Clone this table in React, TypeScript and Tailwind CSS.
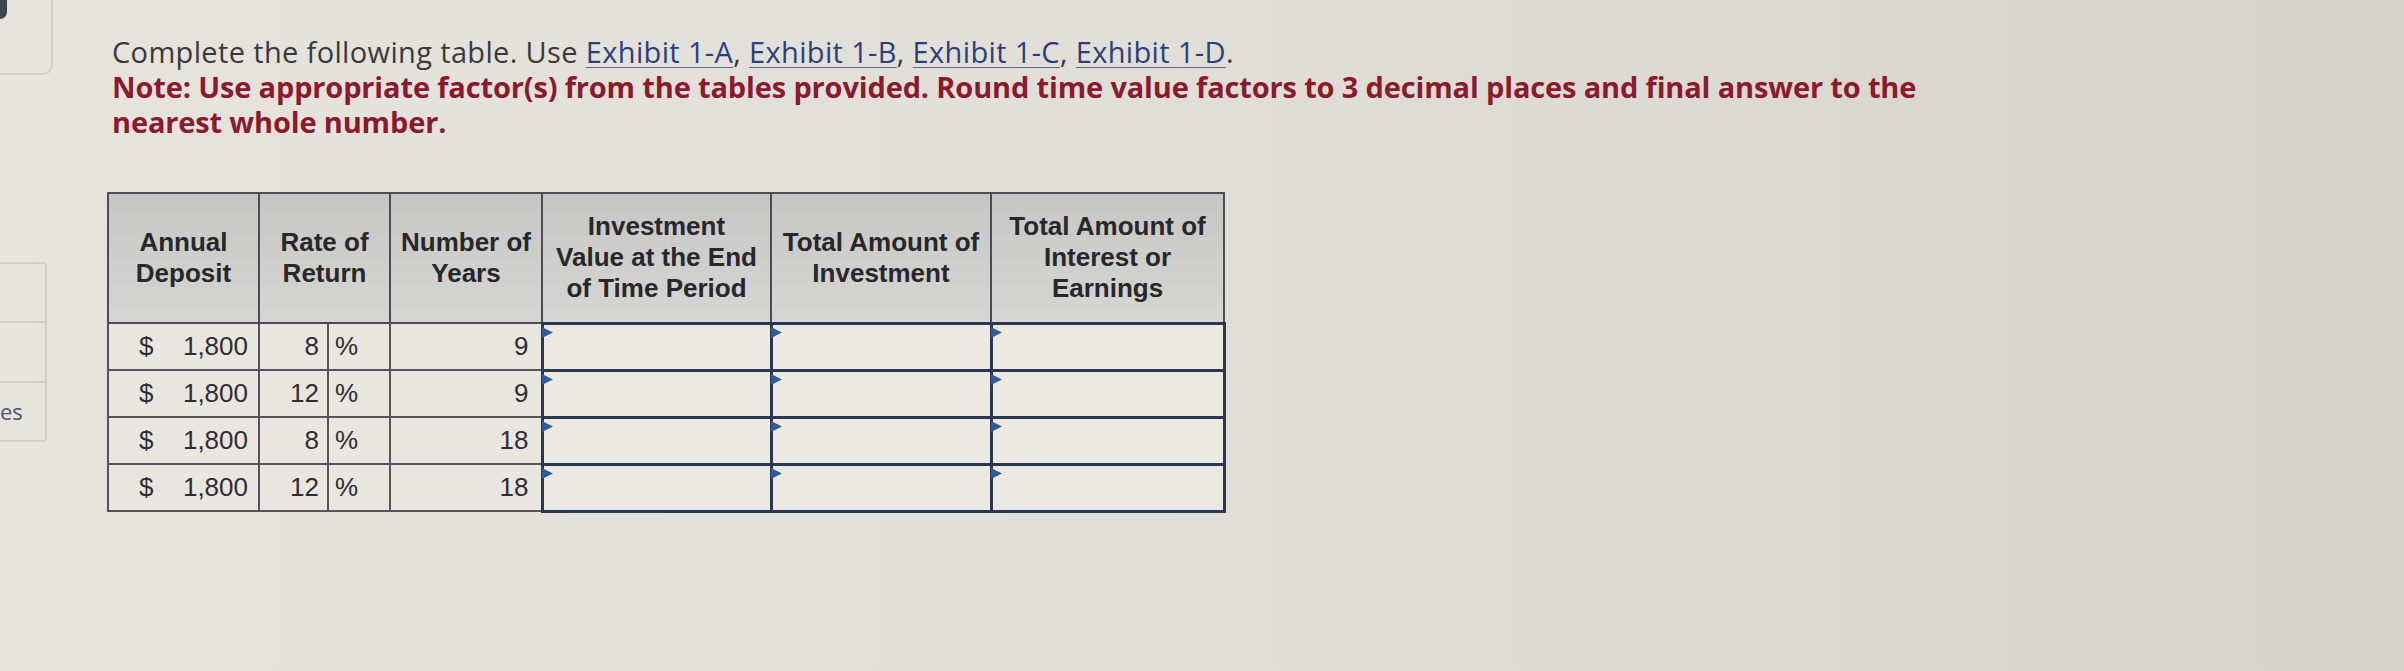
import { useState } from "react";

type Row = { deposit: string; rate: string; years: string };

const rows: Row[] = [
  { deposit: "1,800", rate: "8", years: "9" },
  { deposit: "1,800", rate: "12", years: "9" },
  { deposit: "1,800", rate: "8", years: "18" },
  { deposit: "1,800", rate: "12", years: "18" },
];

const exhibits = ["1-A", "1-B", "1-C", "1-D"];

// little blue flag in the corner of each answer cell
function Flag() {
  return (
    <svg
      className="absolute left-[-2px] top-[2px]"
      width="11"
      height="11"
      viewBox="0 0 11 11"
    >
      <path d="M0 0 L11 5.5 L0 11 Z" fill="#2f5c97" />
    </svg>
  );
}

function AnswerCell({ value, onChange }: { value: string; onChange: (v: string) => void }) {
  return (
    <td className="relative h-[47px] border-[3px] border-[#2b3654] bg-[#ece9e3] p-0">
      <Flag />
      <input
        value={value}
        onChange={(e) => onChange(e.target.value)}
        className="h-full w-full bg-transparent px-3 text-right outline-none"
      />
    </td>
  );
}

export default function App() {
  const [answers, setAnswers] = useState<string[][]>(rows.map(() => ["", "", ""]));

  const setAnswer = (r: number, c: number, v: string) => {
    setAnswers((prev) => prev.map((row, i) => (i === r ? row.map((x, j) => (j === c ? v : x)) : row)));
  };

  return (
    <div className="flex h-[671px] w-full overflow-hidden bg-linear-to-r from-[#e7e4de] via-[#e1ded8] to-[#d6d3cc] font-['Liberation_Sans',Arial,sans-serif]">
      {/* side panel, mostly off screen */}
      <aside className="flex w-[53px] shrink-0 flex-col">
        <div className="relative h-[75px] w-[53px] rounded-br-[10px] border-r-2 border-b-2 border-[#d3d0ca]">
          <div className="h-[19px] w-[7px] rounded-br-full bg-[#3b474d]" />
        </div>
        <div className="mt-[187px] flex h-[180px] w-[47px] flex-col rounded-r-[4px] border-y-2 border-r-2 border-[#d3d0ca]">
          <div className="flex-1 border-b-2 border-[#d3d0ca]" />
          <div className="flex-1 border-b-2 border-[#d3d0ca]" />
          <div className="flex flex-1 items-center">
            <span className="font-['Open_Sans',sans-serif] text-[22px] text-[#4b586b]">es</span>
          </div>
        </div>
      </aside>

      <main className="flex-1 pl-[59px] pt-[34px]">
        <div className="font-['Open_Sans',sans-serif] text-[29px] leading-[35px] text-[#3a3a3c]">
          <p className="tracking-[0.35px]">
            Complete the following table. Use{" "}
            {exhibits.map((ex, i) => (
              <span key={ex}>
                <a href="#" className="text-[#2c3f7c] underline decoration-[#5b6790] decoration-1 underline-offset-[4px]">
                  Exhibit {ex}
                </a>
                {i < exhibits.length - 1 ? ", " : "."}
              </span>
            ))}
          </p>
          <p className="font-bold tracking-[-0.15px] text-[#8a1a2c]">
            Note: Use appropriate factor(s) from the tables provided. Round time value factors to 3 decimal places and
            final answer to the
            <br />
            nearest whole number.
          </p>
        </div>

        <table className="ml-[-5px] mt-[53px] table-fixed border-collapse text-[26px] leading-[31px] text-[#2f2d33]">
          <colgroup>
            <col className="w-[151px]" />
            <col className="w-[69px]" />
            <col className="w-[62px]" />
            <col className="w-[152px]" />
            <col className="w-[229px]" />
            <col className="w-[220px]" />
            <col className="w-[233px]" />
          </colgroup>
          <thead>
            <tr className="h-[130px] bg-linear-to-b from-[#c6c6c5] to-[#d6d6d3] font-bold text-[#29262c]">
              <th className="border-2 border-[#4f4a55] px-1 font-bold">
                Annual
                <br />
                Deposit
              </th>
              <th colSpan={2} className="border-2 border-[#4f4a55] px-1 font-bold">
                Rate of
                <br />
                Return
              </th>
              <th className="border-2 border-[#4f4a55] px-0 font-bold">
                Number of
                <br />
                Years
              </th>
              <th className="border-2 border-[#4f4a55] px-1 font-bold">
                Investment
                <br />
                Value at the End
                <br />
                of Time Period
              </th>
              <th className="border-2 border-[#4f4a55] px-1 font-bold">
                Total Amount of
                <br />
                Investment
              </th>
              <th className="border-2 border-[#4f4a55] px-1 font-bold">
                Total Amount of
                <br />
                Interest or
                <br />
                Earnings
              </th>
            </tr>
          </thead>
          <tbody>
            {rows.map((row, r) => (
              <tr key={r} className="h-[47px]">
                <td className="border-2 border-[#57525d] bg-[#e9e6e0] pl-[30px] pr-[10px]">
                  <div className="flex justify-between">
                    <span>$</span>
                    <span>{row.deposit}</span>
                  </div>
                </td>
                <td className="border-2 border-[#57525d] bg-[#e9e6e0] pr-[8px] text-right">{row.rate}</td>
                <td className="border-2 border-[#57525d] bg-[#e9e6e0] pl-[6px] text-left">%</td>
                <td className="border-2 border-[#57525d] bg-[#e9e6e0] pr-[12px] text-right">{row.years}</td>
                {[0, 1, 2].map((c) => (
                  <AnswerCell key={c} value={answers[r][c]} onChange={(v) => setAnswer(r, c, v)} />
                ))}
              </tr>
            ))}
          </tbody>
        </table>
      </main>
    </div>
  );
}
